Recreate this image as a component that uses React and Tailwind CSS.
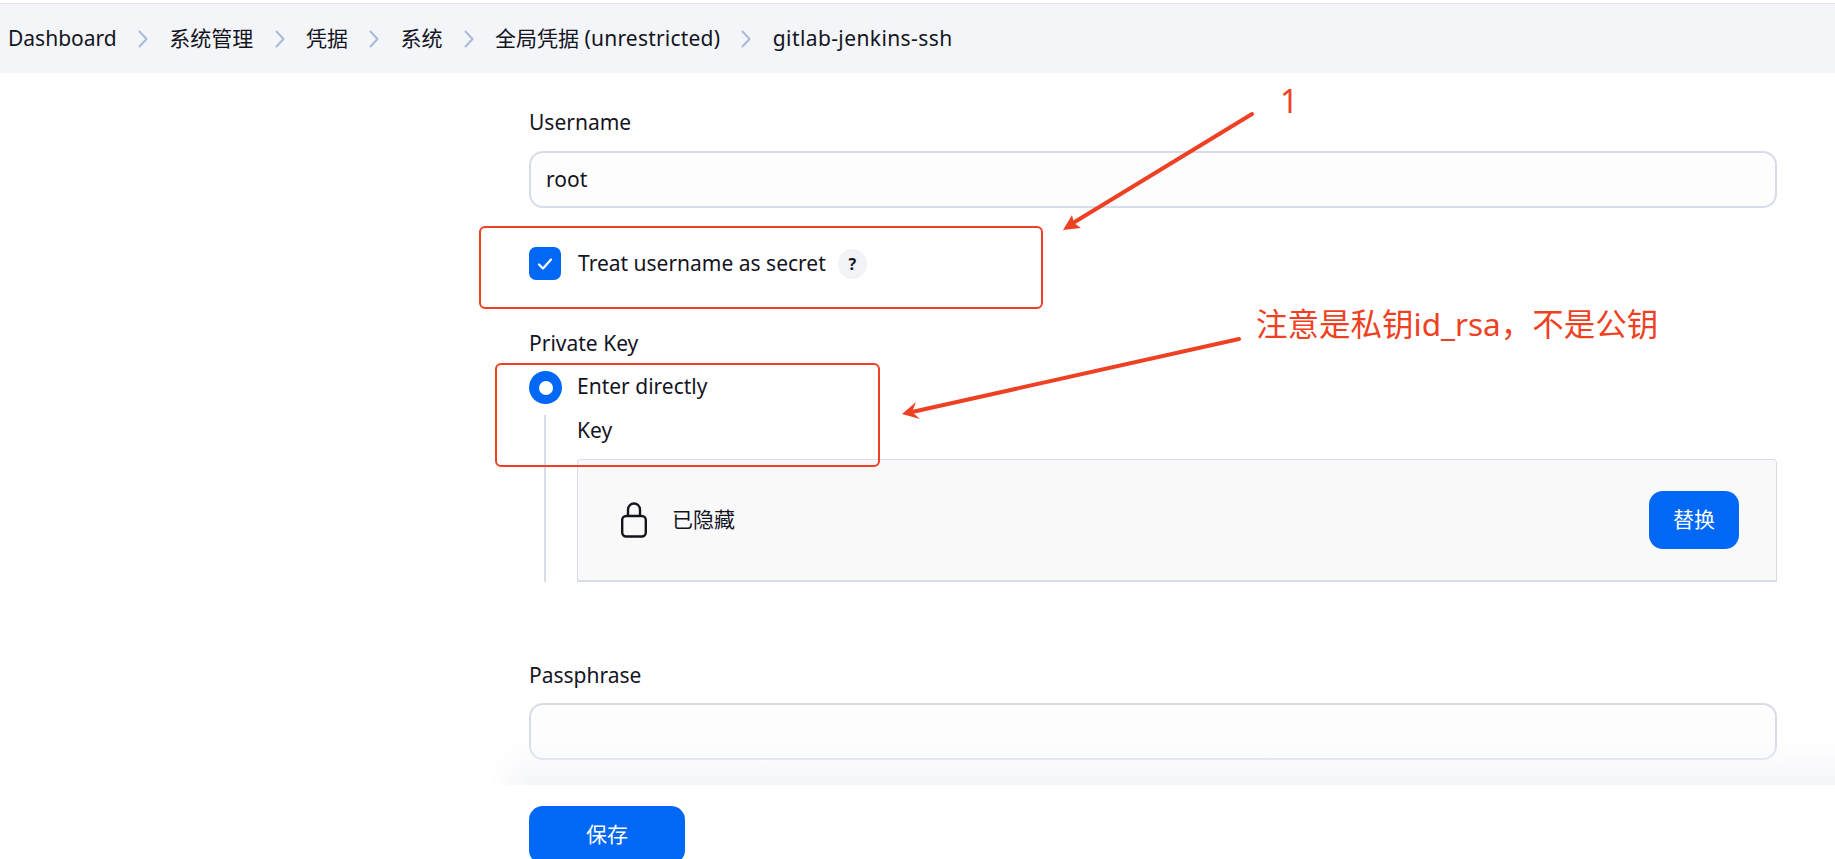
import React from "react";

function Sep() {
  return (
    <svg width="12" height="20" viewBox="0 0 12 20" fill="none" className="shrink-0">
      <path d="M2.5 2.5l7 7.5-7 7.5" stroke="#a9bbd6" strokeWidth="2" strokeLinecap="round" strokeLinejoin="round" />
    </svg>
  );
}

function Breadcrumb() {
  return (
    <div className="mt-[3px] h-[70px] border-t border-[#e3e4e6] bg-[#f3f5f8] pl-2 flex items-center gap-[20.3px] text-[21px] text-[#14141f]">
      <span className="whitespace-nowrap">Dashboard</span>
      <Sep />
      <span className="whitespace-nowrap">系统管理</span>
      <Sep />
      <span className="whitespace-nowrap">凭据</span>
      <Sep />
      <span className="whitespace-nowrap">系统</span>
      <Sep />
      <span className="whitespace-nowrap">全局凭据 <span className="tracking-[0.2px]">(unrestricted)</span></span>
      <Sep />
      <span className="whitespace-nowrap tracking-[0.4px]">gitlab-jenkins-ssh</span>
    </div>
  );
}

function TextInput({ value }) {
  return (
    <div className="h-[57px] rounded-[14px] border-2 border-[#d8dcea] bg-[#fdfdfe] flex items-center pl-[15px] text-[21px] text-[#14141f]">
      {value}
    </div>
  );
}

function Annotations() {
  return (
    <>
      <div className="absolute left-[479px] top-[226px] w-[564px] h-[83px] border-2 border-[#ee4123] rounded-[6px]" />
      <div className="absolute left-[495px] top-[363px] w-[385px] h-[104px] border-2 border-[#ee4123] rounded-[6px]" />
      <div className="absolute left-[1280px] top-[81px] text-[32px] leading-[40px] text-[#ee4123]">1</div>
      <div className="absolute left-[1256px] top-[303px] text-[31.5px] leading-[42px] whitespace-nowrap text-[#ee4123]">注意是私钥id_rsa，不是公钥</div>
      <svg className="absolute left-0 top-0 pointer-events-none" width="1835" height="859" fill="none">
        <path d="M1252 114L1073 223" stroke="#ee4123" strokeWidth="4" strokeLinecap="round" />
        <path d="M1063 230L1072 215L1074 223L1081 228Z" fill="#ee4123" />
        <path d="M1239 339L912 412" stroke="#ee4123" strokeWidth="4" strokeLinecap="round" />
        <path d="M902 414L916 402L912 412L920 419Z" fill="#ee4123" />
      </svg>
    </>
  );
}

export default function App() {
  return (
    <div
      className="relative w-[1835px] h-[859px] overflow-hidden bg-white"
      style={{ fontFamily: '"Noto Sans", "Noto Sans CJK SC", sans-serif' }}
    >
      <Breadcrumb />
      <div className="relative ml-[529px] w-[1248px] text-[#14141f] text-[21px]">
        <div className="h-[32px] mt-[33px] leading-[32px]">Username</div>
        <div className="mt-[13px]"><TextInput value="root" /></div>

        <div className="mt-[39px] flex items-center h-[33px]">
          <div className="w-[32px] h-[33px] rounded-[7px] bg-[#0068f5] flex items-center justify-center">
            <svg width="16" height="14" viewBox="0 0 16 14" fill="none">
              <path d="M2 7.5l4 4 8-9" stroke="#fff" strokeWidth="2.2" strokeLinecap="round" strokeLinejoin="round" />
            </svg>
          </div>
          <span className="ml-[17px]">Treat username as secret</span>
          <span className="ml-[12px] w-[29px] h-[30px] rounded-full bg-[#f1f3f7] flex items-center justify-center text-[16px] font-bold">?</span>
        </div>

        <div className="mt-[47px] h-[32px] leading-[32px]">Private Key</div>
        <div className="mt-[12px] flex items-center h-[33px]">
          <div className="w-[33px] h-[33px] rounded-full bg-[#0068f5] flex items-center justify-center">
            <div className="w-[14px] h-[14px] rounded-full bg-white" />
          </div>
          <span className="ml-[15px] mt-[-2px]">Enter directly</span>
        </div>

        <div className="mt-[11px] flex">
          <div className="ml-[15px] w-[2px] bg-[#d8dcea]" />
          <div className="ml-[31px] flex-1">
            <div className="h-[32px] leading-[32px] mt-[-1px]">Key</div>
            <div className="mt-[13px] h-[123px] bg-[#f9f9fa] border border-[#d8dcea] border-b-2 rounded-t-[4px] flex items-center pl-[43px] pr-[37px]">
              <svg width="26" height="36" viewBox="0 0 26 36" fill="none" className="shrink-0">
                <rect x="1.2" y="14" width="23.6" height="20.5" rx="4" stroke="#14141f" strokeWidth="2.4" />
                <path d="M7 14V7.5a6 6 0 0 1 12 0V14" stroke="#14141f" strokeWidth="2.4" />
              </svg>
              <span className="ml-[25px] mt-[-1px]">已隐藏</span>
              <button className="ml-auto w-[90px] h-[58px] mt-[-1px] rounded-[14px] bg-[#0068f5] text-white text-[21px]">替换</button>
            </div>
          </div>
        </div>

        <div className="mt-[77px] h-[32px] leading-[32px]">Passphrase</div>
        <div className="mt-[12px]"><TextInput value="" /></div>

        <button className="mt-[46px] block w-[156px] h-[58px] rounded-[14px] bg-[#0068f5] text-white text-[21px]">保存</button>
      </div>
      <div className="absolute left-[490px] right-0 top-[742px] h-[43px] bg-gradient-to-b from-[#f5f6fa00] to-[#f5f6fa] pointer-events-none" />
      <div className="absolute left-[490px] w-[38px] top-[742px] h-[43px] bg-gradient-to-r from-white to-[#ffffff00] pointer-events-none" />
      <Annotations />
    </div>
  );
}
